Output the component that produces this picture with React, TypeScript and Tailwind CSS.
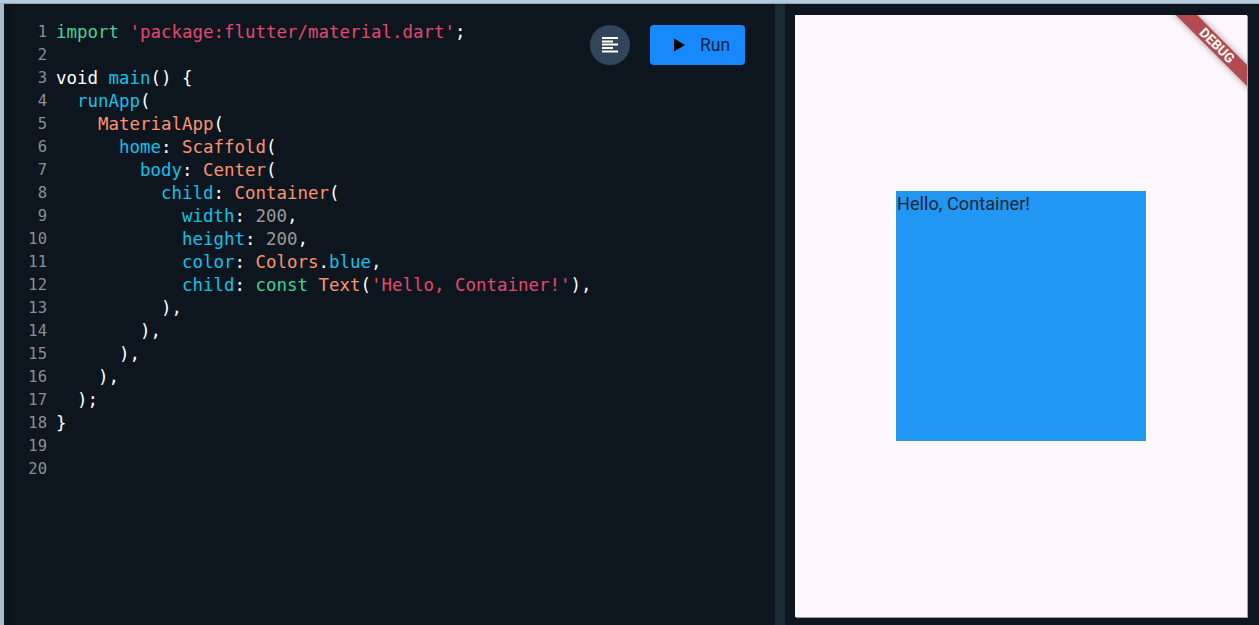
import React from "react";

const C = {
  g: "text-[#43d48f]",
  s: "text-[#e6476f]",
  w: "text-white",
  b: "text-[#10c2ea]",
  o: "text-[#ff9270]",
  n: "text-[#9a9a9a]",
};

type Seg = [string, keyof typeof C];
const lines: Seg[][] = [
  [["import", "g"], [" ", "w"], ["'package:flutter/material.dart'", "s"], [";", "w"]],
  [],
  [["void", "w"], [" ", "w"], ["main", "b"], ["() {", "w"]],
  [["  ", "w"], ["runApp", "b"], ["(", "w"]],
  [["    ", "w"], ["MaterialApp", "o"], ["(", "w"]],
  [["      ", "w"], ["home", "b"], [": ", "w"], ["Scaffold", "o"], ["(", "w"]],
  [["        ", "w"], ["body", "b"], [": ", "w"], ["Center", "o"], ["(", "w"]],
  [["          ", "w"], ["child", "b"], [": ", "w"], ["Container", "o"], ["(", "w"]],
  [["            ", "w"], ["width", "b"], [": ", "w"], ["200", "n"], [",", "w"]],
  [["            ", "w"], ["height", "b"], [": ", "w"], ["200", "n"], [",", "w"]],
  [["            ", "w"], ["color", "b"], [": ", "w"], ["Colors", "o"], [".", "w"], ["blue", "b"], [",", "w"]],
  [["            ", "w"], ["child", "b"], [": ", "w"], ["const", "g"], [" ", "w"], ["Text", "o"], ["(", "w"], ["'Hello, Container!'", "s"], ["),", "w"]],
  [["          ", "w"], ["),", "w"]],
  [["        ", "w"], ["),", "w"]],
  [["      ", "w"], ["),", "w"]],
  [["    ", "w"], ["),", "w"]],
  [["  ", "w"], [");", "w"]],
  [["}", "w"]],
  [],
  [],
];

export default function App() {
  return (
    <div className="w-[1259px] h-[625px] overflow-hidden bg-[#0d1620] border-t-[3px] border-t-[#b5cbe2] flex flex-col">
      <div className="flex-1 min-h-0 flex border-t border-l-[4px] border-t-[#9aa3ab] border-l-[#a9bccf]">
        <div className="relative w-[771px] bg-[#0d161f] font-['DejaVu_Sans_Mono',monospace] text-[17.45px] leading-[23px] shrink-0 flex">
          <div className="w-[10px] h-full bg-[#0b141c] shrink-0" />
          <div className="pt-[17px]">
            {lines.map((segs, i) => (
              <div key={i} className="flex h-[23px]">
                <div className="w-[33px] text-right text-[#8a8f94] text-[15.5px] shrink-0">{i + 1}</div>
                <div className="pl-[9px] whitespace-pre">
                  {segs.map(([t, c], j) => (
                    <span key={j} className={C[c]}>{t}</span>
                  ))}
                </div>
              </div>
            ))}
          </div>
          <div className="absolute top-[21px] left-[586px] w-[40px] h-[40px] rounded-full bg-[#31465a] flex items-center justify-center">
            <svg width="16" height="16" viewBox="0 0 16 16" fill="#fff">
              <rect x="0" y="0" width="16" height="2" />
              <rect x="0" y="3.5" width="11" height="2" />
              <rect x="0" y="6.5" width="16" height="2" />
              <rect x="0" y="10" width="11" height="2" />
              <rect x="0" y="13.5" width="16" height="2" />
            </svg>
          </div>
          <div className="absolute top-[21px] left-[646px] w-[95px] h-[40px] rounded-[4px] bg-[#1789fc] flex items-center font-['Roboto',sans-serif] text-[17.5px] text-[#0d2445]">
            <svg className="ml-[23px]" width="12" height="14" viewBox="0 0 12 14" fill="#000">
              <path d="M1 0.5 L12 7 L1 13.5 Z" />
            </svg>
            <span className="ml-[15px]">Run</span>
          </div>
        </div>
        <div className="w-[10px] h-full bg-[#1b2934] shrink-0" />
        <div className="flex-1 pl-[10px] pt-[11px]">
          <div className="relative w-[452px] h-[602px] bg-[#fff7fe] overflow-hidden shadow-[1px_1px_0_#a59fae]">
            <div className="ml-[101px] mt-[176px] w-[250px] h-[250px] pl-[1px] bg-[#2196f3] font-['Roboto',sans-serif] text-[18.2px] leading-[25px] text-[#1d2733]">
              Hello, Container!
            </div>
            <div className="absolute top-[22.5px] left-[367px] w-[110px] h-[15px] rotate-45 bg-[#b24a50] shadow-[0_0_7px_rgba(0,0,0,0.4)] flex items-center justify-center font-['Roboto',sans-serif] font-bold text-[13.5px] text-white">
              DEBUG
            </div>
          </div>
        </div>
      </div>
    </div>
  );
}
